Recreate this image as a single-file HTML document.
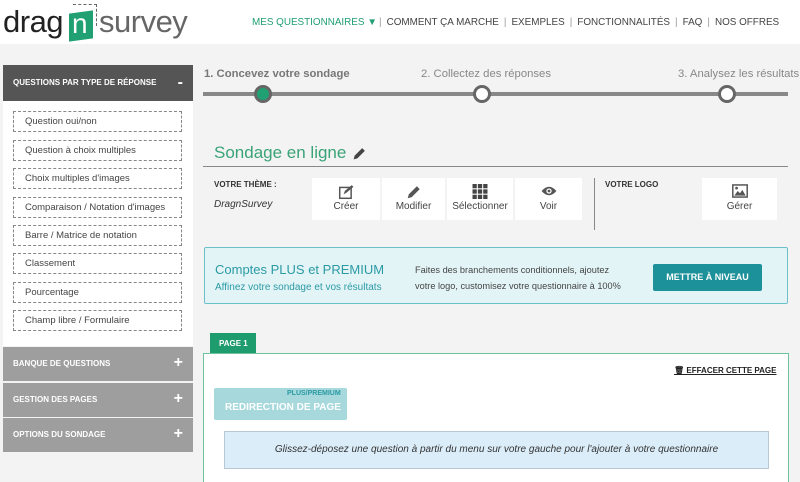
<!DOCTYPE html>
<html style="width:800px;height:482px;overflow:hidden"><head><meta charset="utf-8"><style>
*{margin:0;padding:0;box-sizing:border-box}
body{width:800px;height:482px;overflow:hidden;background:#f3f3f3;font-family:"Liberation Sans",Arial,sans-serif;position:relative}
.a{position:absolute;white-space:nowrap}
.hdr{left:0;top:0;width:800px;height:44px;background:#fff}
.nav{top:17px;font-size:9.9px;color:#444}
.nav span.s{color:#999;margin:0 5px}
.side-h{left:3px;top:65px;width:190px;height:36px;background:#555;color:#fff;font-size:8px;font-weight:bold;padding:13px 0 0 10px}
.side-w{left:3px;top:101px;width:190px;height:245px;background:#fff}
.it{left:13px;width:169px;height:21px;border:1px dashed #888;font-size:9.5px;color:#444;padding:4px 0 0 11px;background:#fff}
.gs{left:3px;width:190px;height:34px;background:#9e9e9e;color:#fff;font-size:8px;font-weight:bold;padding:12px 0 0 10px}
.gs b,.side-h b{position:absolute;right:10px;top:7px;font-size:16px}
.step{top:68px;font-size:11.3px;color:#888}
.line{left:203px;top:92px;width:585px;height:4px;background:#888}
.dot{width:18px;height:18px;border-radius:50%;border:3px solid #666;background:#fff;top:85px}
.tile{top:178px;height:42px;background:#fff;font-size:10px;color:#444;text-align:center;padding-top:23px}
.tile svg{position:absolute;left:50%;top:6px;transform:translateX(-50%)}
</style></head><body>
<div class="a hdr"></div>
<div class="a" style="left:3px;top:4px;font-size:31px;color:#222;letter-spacing:-0.5px">drag</div>
<div class="a" style="left:69px;top:12px;width:24px;height:28px;background:#21a073;transform:skewY(-8deg)"></div>
<div class="a" style="left:73px;top:4px;width:24px;height:22px;border:1px dashed #666;border-bottom:none;border-left:none"></div>
<div class="a" style="left:72px;top:8px;font-size:28px;color:#fff">n</div>
<div class="a" style="left:99px;top:4px;font-size:31px;color:#666;letter-spacing:-0.5px">survey</div>
<div class="a nav" style="left:252px"><span style="color:#21a073">MES QUESTIONNAIRES ▼</span><span class="s" style="margin:0 5px 0 2px">|</span>COMMENT ÇA MARCHE<span class="s">|</span>EXEMPLES<span class="s">|</span>FONCTIONNALITÉS<span class="s">|</span>FAQ<span class="s">|</span>NOS OFFRES</div>

<div class="a side-h">QUESTIONS PAR TYPE DE RÉPONSE<b style="top:9px">-</b></div>
<div class="a side-w"></div>
<div class="a it" style="top:111px">Question oui/non</div>
<div class="a it" style="top:140px">Question à choix multiples</div>
<div class="a it" style="top:168px">Choix multiples d'images</div>
<div class="a it" style="top:197px">Comparaison / Notation d'images</div>
<div class="a it" style="top:225px">Barre / Matrice de notation</div>
<div class="a it" style="top:253px">Classement</div>
<div class="a it" style="top:282px">Pourcentage</div>
<div class="a it" style="top:310px">Champ libre / Formulaire</div>
<div class="a gs" style="top:347px">BANQUE DE QUESTIONS<b>+</b></div>
<div class="a gs" style="top:383px">GESTION DES PAGES<b>+</b></div>
<div class="a gs" style="top:418px">OPTIONS DU SONDAGE<b>+</b></div>

<div class="a step" style="left:204px;font-weight:bold;color:#777">1. Concevez votre sondage</div>
<div class="a step" style="left:421px">2. Collectez des réponses</div>
<div class="a step" style="left:678px">3. Analysez les résultats</div>
<div class="a line"></div>
<div class="a dot" style="left:254px;background:#21a073"></div>
<div class="a dot" style="left:473px"></div>
<div class="a dot" style="left:718px"></div>

<div class="a" style="left:214px;top:143px;font-size:17px;color:#3aa378">Sondage en ligne</div>
<svg class="a" style="left:352px;top:146px" width="15" height="15" viewBox="0 0 14 14"><path d="M1.5 12.5l1-3.5 7-7 2.5 2.5-7 7z" fill="#444"/></svg>
<div class="a" style="left:203px;top:166px;width:585px;height:1px;background:#888"></div>
<div class="a" style="left:214px;top:180px;font-size:8px;font-weight:bold;color:#333">VOTRE THÈME :</div>
<div class="a" style="left:214px;top:199px;font-size:10px;font-style:italic;color:#333">DragnSurvey</div>
<div class="a tile" style="left:312px;width:68px">Créer<svg width="16" height="16" viewBox="0 0 14 14"><rect x="1.5" y="3" width="10" height="9.5" fill="none" stroke="#555" stroke-width="1.3"/><path d="M5 9l1-3 6-5 1.5 1.5-6 5z" fill="#555"/></svg></div>
<div class="a tile" style="left:382px;width:63px">Modifier<svg width="16" height="16" viewBox="0 0 14 14"><path d="M1.5 12.5l1-3.5 7-7 2.5 2.5-7 7z" fill="#555"/></svg></div>
<div class="a tile" style="left:447px;width:66px">Sélectionner<svg width="15" height="15" viewBox="0 0 14 14" fill="#444"><rect x="0" y="0" width="4" height="4"/><rect x="5" y="0" width="4" height="4"/><rect x="10" y="0" width="4" height="4"/><rect x="0" y="5" width="4" height="4"/><rect x="5" y="5" width="4" height="4"/><rect x="10" y="5" width="4" height="4"/><rect x="0" y="10" width="4" height="4"/><rect x="5" y="10" width="4" height="4"/><rect x="10" y="10" width="4" height="4"/></svg></div>
<div class="a tile" style="left:515px;width:67px">Voir<svg width="17" height="14" viewBox="0 0 16 12"><path d="M1 6Q8-2 15 6Q8 14 1 6z" fill="#555"/><circle cx="8" cy="6" r="2.5" fill="#fff"/><circle cx="8" cy="6" r="1.3" fill="#555"/></svg></div>
<div class="a" style="left:594px;top:178px;width:1px;height:52px;background:#888"></div>
<div class="a" style="left:605px;top:180px;font-size:8px;font-weight:bold;color:#333">VOTRE LOGO</div>
<div class="a tile" style="left:702px;width:75px">Gérer<svg width="16" height="14" viewBox="0 0 14 12"><rect x="0.7" y="0.7" width="12.6" height="10.6" fill="none" stroke="#555" stroke-width="1.3"/><path d="M2 10l3-4 2 2 2-3 3 5z" fill="#555"/><circle cx="4" cy="3.5" r="1.2" fill="#555"/></svg></div>

<div class="a" style="left:204px;top:247px;width:584px;height:57px;background:#e3f4f7;border:1px solid #6cc1c8;border-radius:2px"></div>
<div class="a" style="left:215px;top:262px;font-size:13px;color:#2a9aa3">Comptes PLUS et PREMIUM</div>
<div class="a" style="left:215px;top:282px;font-size:10px;color:#2a9aa3">Affinez votre sondage et vos résultats</div>
<div class="a" style="left:415px;top:262px;font-size:9.2px;color:#444;line-height:16px">Faites des branchements conditionnels, ajoutez<br>votre logo, customisez votre questionnaire à 100%</div>
<div class="a" style="left:653px;top:264px;width:109px;height:27px;background:#1d919a;border-radius:2px;color:#fff;font-size:9px;font-weight:bold;text-align:center;padding-top:8px">METTRE À NIVEAU</div>

<div class="a" style="left:210px;top:333px;width:46px;height:21px;background:#1f9c6e;color:#fff;font-size:8px;font-weight:bold;padding:6px 0 0 9px">PAGE 1</div>
<div class="a" style="left:203px;top:353px;width:586px;height:129px;background:#fff;border:1px solid #6fc2a0;border-bottom:none"></div>
<div class="a" style="left:674px;top:366px;font-size:8px;font-weight:bold;color:#222;text-decoration:underline">🗑 EFFACER CETTE PAGE</div>
<div class="a" style="left:214px;top:388px;width:133px;height:32px;background:#a6d8dc;border-radius:2px"></div>
<div class="a" style="left:287px;top:390px;font-size:7px;font-weight:bold;color:#2a9aa3">PLUS/PREMIUM</div>
<div class="a" style="left:225px;top:402px;font-size:10px;font-weight:bold;color:#fff">REDIRECTION DE PAGE</div>
<div class="a" style="left:224px;top:431px;width:545px;height:38px;background:#dbedf9;border:1px solid #b8c8d4;font-size:10px;font-style:italic;color:#333;text-align:center;padding-top:12px">Glissez-déposez une question à partir du menu sur votre gauche pour l'ajouter à votre questionnaire</div>
</body></html>
